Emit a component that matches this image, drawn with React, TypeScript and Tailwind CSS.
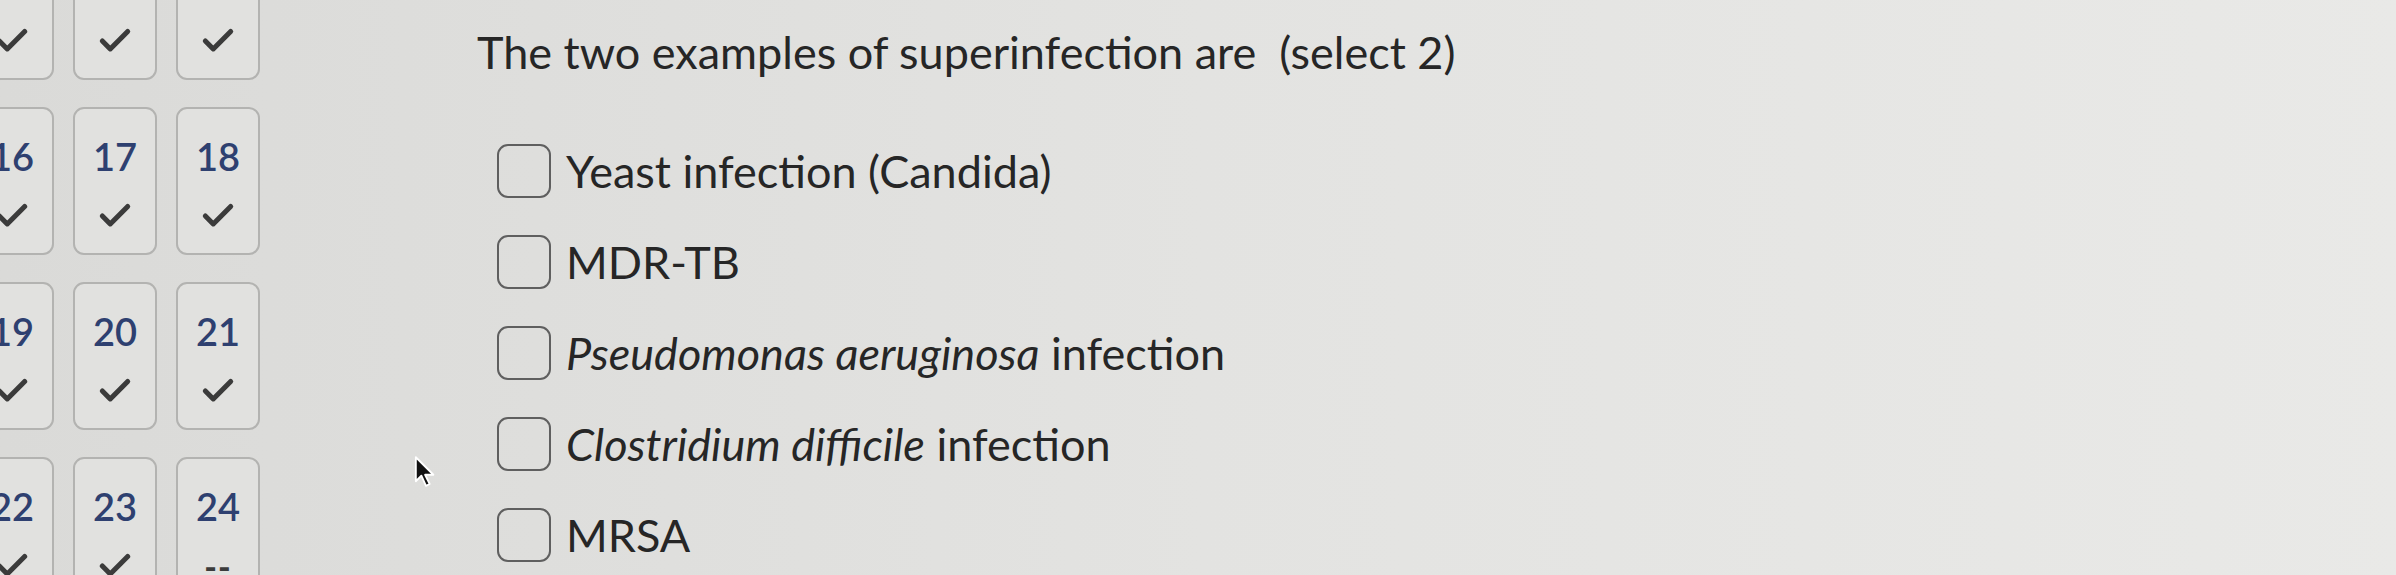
import { Check } from "lucide-react";

type Tile = { n: number; done: boolean };

const rows: Tile[][] = [
  [
    { n: 13, done: true },
    { n: 14, done: true },
    { n: 15, done: true },
  ],
  [
    { n: 16, done: true },
    { n: 17, done: true },
    { n: 18, done: true },
  ],
  [
    { n: 19, done: true },
    { n: 20, done: true },
    { n: 21, done: true },
  ],
  [
    { n: 22, done: true },
    { n: 23, done: true },
    { n: 24, done: false },
  ],
];

const options = [
  { key: "a", label: <>Yeast infection (Candida)</> },
  { key: "b", label: <>MDR-TB</> },
  {
    key: "c",
    label: (
      <>
        <em>Pseudomonas aeruginosa</em> infection
      </>
    ),
  },
  {
    key: "d",
    label: (
      <>
        <em>Clostridium difficile</em> infection
      </>
    ),
  },
  { key: "e", label: <>MRSA</> },
];

function QuestionTile({ n, done }: Tile) {
  return (
    <div className="flex h-[148px] w-[84px] shrink-0 flex-col items-center rounded-[11px] border-2 border-[#b3b3b1] bg-[#e1e1df] pt-[25px]">
      <span className="text-[38px] leading-[44px] font-semibold text-[#2e4070]">{n}</span>
      <div className="mt-[20px] flex h-[36px] items-center text-[#3b3b3b]">
        {done ? (
          <Check size={38} strokeWidth={3.2} />
        ) : (
          <span className="text-[34px] leading-none font-black tracking-[1px]">--</span>
        )}
      </div>
    </div>
  );
}

export default function App() {
  return (
    <div
      className="relative flex h-[575px] w-[2396px] overflow-hidden bg-gradient-to-r from-[#dadad8] via-[#e3e3e1] to-[#e9e9e7]"
      style={{ fontFamily: "Lato, 'Open Sans', sans-serif" }}
    >
      {/* навигация по вопросам */}
      <div className="ml-[-30px] mt-[-68px] flex w-[300px] shrink-0 flex-col gap-[27px]">
        {rows.map((row, i) => (
          <div key={i} className="flex gap-[19px]">
            {row.map((t) => (
              <QuestionTile key={t.n} {...t} />
            ))}
          </div>
        ))}
      </div>

      {/* вопрос */}
      <div className="ml-[207px] flex flex-col pt-[24px] text-[#262626]">
        <h1 className="text-[45px] leading-[56px] font-normal whitespace-pre">
          The two examples of superinfection are  (select 2)
        </h1>
        <div className="mt-[63px] ml-[20px] flex flex-col gap-[35px]">
          {options.map((o) => (
            <label key={o.key} className="flex items-center gap-[15px]">
              <span className="h-[54px] w-[54px] shrink-0 rounded-[11px] border-2 border-[#5f5f5f]" />
              <span className="text-[45px] leading-[56px]">{o.label}</span>
            </label>
          ))}
        </div>
      </div>

      {/* курсор мыши */}
      <svg
        className="absolute left-[414px] top-[455px]"
        width="24"
        height="34"
        viewBox="0 0 26 36"
      >
        <path
          d="M2 2 L2 28 L8 22 L13 33 L17 31 L12 21 L21 21 Z"
          fill="#111"
          stroke="#fff"
          strokeWidth="2"
          strokeLinejoin="round"
        />
      </svg>
    </div>
  );
}
